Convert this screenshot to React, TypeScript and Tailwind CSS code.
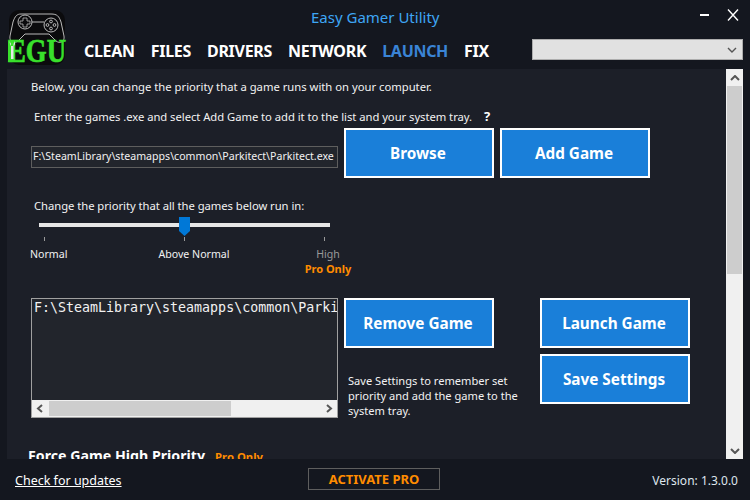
import React from "react";

function Btn({ children, className = "" }: { children: React.ReactNode; className?: string }) {
  return (
    <button className={`w-[150px] h-[50px] shrink-0 bg-[#1a7fd9] border-2 border-white text-white text-[15.3px] font-bold flex items-center justify-center pr-[2px] ${className}`}>
      {children}
    </button>
  );
}

function Logo() {
  return (
    <svg width="60" height="58" viewBox="0 0 60 58" className="block">
      <rect x="2" y="0" width="56" height="55" rx="10" fill="#0b0b0d" />
      <g fill="none" stroke="#b9b9b9" strokeWidth="1">
        <path d="M14 4 h30 c6 0 8 2 10 8 l3 14 c1 6 -4 8 -8 5 l-7 -7 h-24 l-7 7 c-4 3 -9 1 -8 -5 l3 -14 c2 -6 4 -8 8 -8z" />
        <circle cx="18" cy="12" r="7" />
        <path d="M16 8h4v3h3v3h-3v3h-4v-3h-3v-3h3z" strokeWidth="0.8" />
        <circle cx="44" cy="15" r="7" />
        <circle cx="44" cy="11.5" r="1.4" />
        <circle cx="44" cy="18.5" r="1.4" />
        <circle cx="40.5" cy="15" r="1.4" />
        <circle cx="47.5" cy="15" r="1.4" />
        <path d="M25 12h12" />
      </g>
      <text x="1" y="52" fontFamily="'Liberation Serif', serif" fontWeight="700" fontSize="33" fill="#39e02c" stroke="#39e02c" strokeWidth="0.7" textLength="58" lengthAdjust="spacingAndGlyphs">EGU</text>
      <rect x="1" y="31" width="7" height="21" fill="#39e02c" />
      <path d="M2.5 31l1.5 3v15h2.5v-15l1.5-3v3l-1 2h-3l-1-2z" fill="#e8e8e8" />
    </svg>
  );
}

export default function App() {
  return (
    <div className="w-[750px] h-[500px] bg-[#14171f] text-[#f2f2f2] flex flex-col overflow-hidden font-['Noto_Sans',sans-serif] text-[11.25px]">
      <header className="h-[69px] shrink-0 flex">
        <div className="ml-[7px] mt-[10px] w-[60px] shrink-0"><Logo /></div>
        <div className="flex-1 flex flex-col">
          <div className="h-[29px] flex items-start">
            <div className="ml-[244px] mt-[6px] text-[15px] leading-[22px] text-[#3ea6f5]">Easy Gamer Utility</div>
            <div className="ml-auto mt-[9px] flex items-center text-white">
              <span className="w-[9px] h-[2px] bg-white mr-[18px]" />
              <svg width="12" height="12" viewBox="0 0 12 12" className="mr-[11px]"><path d="M1 0.5L11 11.5M11 0.5L1 11.5" stroke="#fff" strokeWidth="1.4" fill="none" /></svg>
            </div>
          </div>
          <div className="flex items-start h-[40px] pl-[17px]">
            <nav className="flex gap-[16px] text-[16px] font-bold text-white leading-[22px] tracking-[-0.3px] mt-[11px]">
              <span>CLEAN</span>
              <span>FILES</span>
              <span>DRIVERS</span>
              <span>NETWORK</span>
              <span className="text-[#3a84d6]">LAUNCH</span>
              <span>FIX</span>
            </nav>
            <div className="ml-auto mr-[7px] mt-[10px] w-[211px] h-[21px] bg-[#e1e1e1] border border-[#adadad] flex items-center justify-end pr-[5px]">
              <svg width="10" height="6" viewBox="0 0 10 6"><path d="M1 1l4 4 4-4" stroke="#555" strokeWidth="1.4" fill="none" /></svg>
            </div>
          </div>
        </div>
      </header>

      <div className="ml-[7px] w-[736px] h-[390px] shrink-0 bg-[#1c1f28] flex overflow-hidden">
        <main className="w-[719px] pl-[24px] shrink-0">
          <p className="mt-[9px] leading-[17px]">Below, you can change the priority that a game runs with on your computer.</p>
          <p className="mt-[13px] ml-[3px] leading-[17px] flex">
            <span className="tracking-[-0.04px]">Enter the games .exe and select Add Game to add it to the list and your system tray.</span>
            <span className="ml-[12px] font-bold text-[13px] text-white">?</span>
          </p>
          <div className="mt-[3px] flex items-start">
            <div className="mt-[18px] w-[307px] h-[22px] border border-[#5e5e5e] bg-[#22252c] px-[1px] flex items-center text-[10.6px] whitespace-nowrap overflow-hidden">F:\SteamLibrary\steamapps\common\Parkitect\Parkitect.exe</div>
            <Btn className="ml-[6px]">Browse</Btn>
            <Btn className="ml-[6px]">Add Game</Btn>
          </div>
          <p className="mt-[19px] ml-[3px] leading-[17px] tracking-[-0.04px]">Change the priority that all the games below run in:</p>

          <div className="ml-[8px] w-[291px] mt-[3px]">
            <div className="relative h-[20px]">
              <div className="absolute top-[6px] left-0 right-0 h-[4px] bg-[#e6e6e6]" />
              <svg width="11" height="19" viewBox="0 0 11 19" className="absolute left-[140px] top-0"><path d="M0 0h11v14l-5.5 5-5.5-5z" fill="#0078d7" /></svg>
            </div>
            <div className="h-[4px] flex justify-between px-[5px]">
              <span className="w-px h-[4px] bg-[#9a9a9a]" />
              <span className="w-px h-[4px] bg-[#9a9a9a]" />
              <span className="w-px h-[4px] bg-[#9a9a9a]" />
            </div>
          </div>
          <div className="mt-[5px] w-[340px] flex text-[10.6px] leading-[16px]">
            <div className="w-[34px] text-center shrink-0 whitespace-nowrap -ml-[1px]">Normal</div>
            <div className="ml-[90px] w-[80px] text-center shrink-0 whitespace-nowrap">Above Normal</div>
            <div className="ml-[69px] w-[50px] text-center shrink-0 flex flex-col items-center">
              <span className="text-[#9a9a9a]">High</span>
              <span className="text-[#ff8c00] font-bold whitespace-nowrap text-[11px] -mt-[1px]">Pro Only</span>
            </div>
          </div>

          <div className="mt-[21px] flex items-start">
            <div className="w-[307px] h-[120px] shrink-0 border border-[#a0a0a0] bg-[#22252c] flex flex-col">
              <div className="flex-1 overflow-hidden whitespace-nowrap font-['DejaVu_Sans_Mono',monospace] text-[13.3px] leading-[16px] pl-[2px] pt-[1px]">F:\SteamLibrary\steamapps\common\Parkitect\Parkitect.exe</div>
              <div className="h-[17px] bg-[#f0f0f0] flex items-center">
                <svg width="17" height="17" viewBox="0 0 17 17"><path d="M10 5l-4 3.5 4 3.5" stroke="#555" strokeWidth="2" fill="none" /></svg>
                <div className="w-[182px] h-[15px] bg-[#cdcdcd]" />
                <div className="flex-1" />
                <svg width="17" height="17" viewBox="0 0 17 17"><path d="M7 5l4 3.5-4 3.5" stroke="#555" strokeWidth="2" fill="none" /></svg>
              </div>
            </div>
            <div className="ml-[6px] w-[190px] shrink-0">
              <Btn>Remove Game</Btn>
              <p className="mt-[25px] ml-[4px] w-[180px] text-[11.1px] leading-[15px]">Save Settings to remember set priority and add the game to the system tray.</p>
            </div>
            <div className="ml-[6px] flex flex-col gap-[6px]">
              <Btn>Launch Game</Btn>
              <Btn>Save Settings</Btn>
            </div>
          </div>

          <div className="mt-[27px] -ml-[3px] flex items-baseline">
            <span className="text-[14.2px] font-bold text-white leading-[22px]">Force Game High Priority</span>
            <span className="ml-[10px] text-[11.3px] font-bold text-[#ff8c00]">Pro Only</span>
          </div>
        </main>
        <aside className="w-[17px] shrink-0 bg-[#f0f0f0] flex flex-col">
          <div className="h-[17px] flex items-center justify-center">
            <svg width="10" height="6" viewBox="0 0 10 6"><path d="M1 5l4-4 4 4" stroke="#555" strokeWidth="2" fill="none" /></svg>
          </div>
          <div className="mx-[1px] h-[188px] bg-[#cdcdcd]" />
          <div className="flex-1" />
          <div className="h-[17px] flex items-center justify-center">
            <svg width="10" height="6" viewBox="0 0 10 6"><path d="M1 1l4 4 4-4" stroke="#555" strokeWidth="2" fill="none" /></svg>
          </div>
        </aside>
      </div>

      <footer className="flex-1 flex items-center pl-[15px] pr-[12px]">
        <a className="underline text-[12.5px] text-white w-[293px] shrink-0 mt-[4px]">Check for updates</a>
        <div className="w-[132px] h-[22px] border border-[#5e5e5e] flex items-center justify-center text-[13px] font-bold text-[#ff8c00] mb-[1px] pt-[2px]">ACTIVATE PRO</div>
        <div className="ml-auto text-[12px] text-[#dfe6ee] mt-[2px]">Version: 1.3.0.0</div>
      </footer>
    </div>
  );
}
